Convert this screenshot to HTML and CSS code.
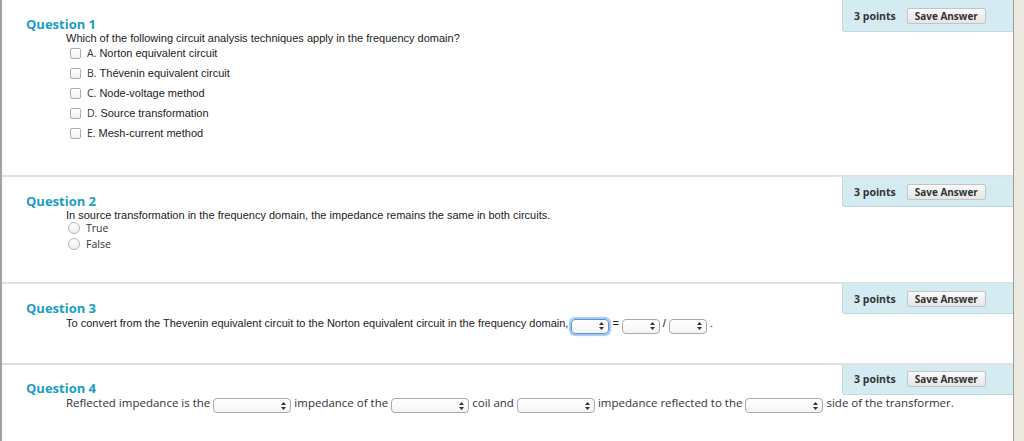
FILE: index.html
```html
<!DOCTYPE html>
<html lang="en">
<head>
  <meta charset="UTF-8" />
  <title>Take Test</title>
  <link rel="stylesheet" href="styles.css">
</head>
<body>

<div class="page">

  <div class="question q1">
    <div class="q-main">
      <h3 class="q-title">Question 1</h3>
      <div class="q-text">Which of the following circuit analysis techniques apply in the frequency domain?</div>
      <ul class="choices">
        <li><span class="checkbox"></span><span class="letter">A.</span>Norton equivalent circuit</li>
        <li><span class="checkbox"></span><span class="letter">B.</span>Thévenin equivalent circuit</li>
        <li><span class="checkbox"></span><span class="letter">C.</span>Node-voltage method</li>
        <li><span class="checkbox"></span><span class="letter">D.</span>Source transformation</li>
        <li><span class="checkbox"></span><span class="letter">E.</span>Mesh-current method</li>
      </ul>
    </div>
    <div class="points">
      <span class="points-label">3 points</span>
      <button class="save-btn">Save Answer</button>
    </div>
  </div>

  <div class="question q2">
    <div class="q-main">
      <h3 class="q-title">Question 2</h3>
      <div class="q-text">In source transformation in the frequency domain, the impedance remains the same in both circuits.</div>
      <ul class="radios">
        <li><span class="radio"></span>True</li>
        <li><span class="radio"></span>False</li>
      </ul>
    </div>
    <div class="points">
      <span class="points-label">3 points</span>
      <button class="save-btn">Save Answer</button>
    </div>
  </div>

  <div class="question q3">
    <div class="q-main">
      <h3 class="q-title">Question 3</h3>
      <div class="q-text fill">To convert from the Thevenin equivalent circuit to the Norton equivalent circuit in the frequency domain,<span class="select short focus"><svg width="5" height="8" viewBox="0 0 5 8"><path d="M2.5 0L5 3H0z M2.5 8L0 5h5z" fill="#333"/></svg></span>=<span class="select short"><svg width="5" height="8" viewBox="0 0 5 8"><path d="M2.5 0L5 3H0z M2.5 8L0 5h5z" fill="#333"/></svg></span>/<span class="select short"><svg width="5" height="8" viewBox="0 0 5 8"><path d="M2.5 0L5 3H0z M2.5 8L0 5h5z" fill="#333"/></svg></span>.</div>
    </div>
    <div class="points">
      <span class="points-label">3 points</span>
      <button class="save-btn">Save Answer</button>
    </div>
  </div>

  <div class="question q4">
    <div class="q-main">
      <h3 class="q-title">Question 4</h3>
      <div class="q-text fill alt">Reflected impedance is the<span class="select"><svg width="5" height="8" viewBox="0 0 5 8"><path d="M2.5 0L5 3H0z M2.5 8L0 5h5z" fill="#333"/></svg></span>impedance of the<span class="select"><svg width="5" height="8" viewBox="0 0 5 8"><path d="M2.5 0L5 3H0z M2.5 8L0 5h5z" fill="#333"/></svg></span>coil and<span class="select"><svg width="5" height="8" viewBox="0 0 5 8"><path d="M2.5 0L5 3H0z M2.5 8L0 5h5z" fill="#333"/></svg></span>impedance reflected to the<span class="select"><svg width="5" height="8" viewBox="0 0 5 8"><path d="M2.5 0L5 3H0z M2.5 8L0 5h5z" fill="#333"/></svg></span>side of the transformer.</div>
    </div>
    <div class="points">
      <span class="points-label">3 points</span>
      <button class="save-btn">Save Answer</button>
    </div>
  </div>

</div>

</body>
</html>
```

FILE: styles.css
```css
body {
  margin: 0;
  background-color: #ece9e1;
  font-family: "Liberation Sans", Arial, sans-serif;
  color: #222;
}
.page {
  width: 1011px;
  height: 441px;
  overflow: hidden;
  background-color: #ffffff;
  border-left: 2px solid #a3a3a3;
  border-right: 1px solid #9c9c9c;
}
.question {
  display: flex;
  align-items: flex-start;
  border-bottom: 2px solid #e1e1e1;
}
.q-main {
  flex: 1;
  min-width: 0;
  padding: 17px 0 30px 24px;
}
.q1 .q-main {
  padding-bottom: 32px;
}
.q3 .q-main {
  padding-bottom: 29px;
}
.q4 .q-main {
  padding: 16px 0 28px 24px;
}
.q-title {
  margin: 0;
  font-family: "Open Sans", sans-serif;
  font-size: 13px;
  line-height: 14px;
  font-weight: bold;
  color: #1b9dc4;
}
.q-text {
  margin: 1px 0 0 40px;
  font-size: 11px;
  line-height: 13px;
  white-space: nowrap;
}
.q-text.fill {
  line-height: 17px;
  margin-top: 0;
}
.q-text.alt {
  font-family: "Open Sans", sans-serif;
  font-size: 11.5px;
  line-height: 16px;
  color: #333;
}
.choices,
.radios {
  list-style: none;
  margin: -2px 0 0 44px;
  padding: 0;
}
.choices li {
  display: flex;
  align-items: center;
  height: 20px;
  font-size: 11px;
}
.checkbox {
  width: 9px;
  height: 9px;
  border: 1px solid #adadad;
  border-radius: 2px;
  margin-right: 6px;
  background: linear-gradient(#ffffff, #f1f1f1);
}
.letter {
  font-family: "Open Sans", sans-serif;
  font-size: 10.5px;
  margin-right: 3px;
  color: #333;
}
.radios {
  margin-left: 42px;
}
.radios li {
  display: flex;
  align-items: center;
  height: 16px;
  font-family: "Open Sans", sans-serif;
  font-size: 10.5px;
  color: #333;
}
.radio {
  width: 10px;
  height: 10px;
  border: 1px solid #b3b3b3;
  border-radius: 50%;
  margin-right: 6px;
  background: linear-gradient(#ffffff, #f0f0f0);
}
.select {
  display: inline-flex;
  align-items: center;
  justify-content: flex-end;
  box-sizing: border-box;
  width: 78px;
  height: 15px;
  margin: 0 3px;
  padding-right: 4px;
  vertical-align: -3px;
  border: 1px solid #a9a9a9;
  border-radius: 4px;
  background: linear-gradient(#ffffff, #f5f5f5);
}
.select.short {
  width: 38px;
}
.select.focus {
  border-color: #5b93dc;
  box-shadow: 0 0 1px 2px #a6c6f0;
}
.points {
  display: flex;
  align-items: center;
  flex-shrink: 0;
  box-sizing: border-box;
  width: 171px;
  height: 30px;
  padding-left: 11px;
  background-color: #d4ebf1;
  border-left: 1px solid #c0dae2;
  border-bottom: 1px solid #c0dae2;
  border-bottom-left-radius: 3px;
}
.q1 .points {
  height: 32px;
}
.points-label {
  font-family: "Open Sans", sans-serif;
  font-size: 10.5px;
  font-weight: bold;
  color: #333;
  margin-right: 11px;
}
.save-btn {
  width: 79px;
  height: 16px;
  padding: 0;
  font-family: "Open Sans", sans-serif;
  font-size: 10px;
  font-weight: bold;
  color: #333;
  border: 1px solid #c4c4c4;
  border-radius: 2px;
  background: linear-gradient(#fafafa, #e6e6e6);
}
```
